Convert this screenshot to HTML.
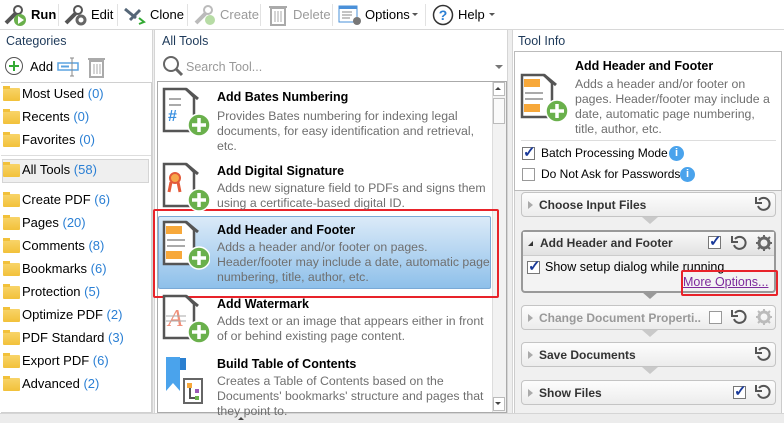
<!DOCTYPE html>
<html><head><meta charset="utf-8"><style>
*{box-sizing:border-box;margin:0;padding:0}
body{width:784px;height:423px;overflow:hidden;background:#fff;font-family:"Liberation Sans",sans-serif;font-size:12px;color:#000;position:relative}
.a{position:absolute;white-space:nowrap}
.tb{font-size:13px}
.gray{color:#9a9a9a}
.n{color:#2a7fd4}
.cat{position:absolute;left:22px;font-size:13px}
.fold{position:absolute;left:3px;width:17px;height:13px;background:linear-gradient(#f8d469,#f2c13a);border-radius:1px}
.fold:before{content:"";position:absolute;left:0;top:-2px;width:7px;height:3px;background:#f2c13a}
.t{position:absolute;left:217px;font-weight:bold;font-size:12.5px}
.d{position:absolute;left:217px;color:#6f6f6f;font-size:12.3px;line-height:15px;white-space:nowrap}
.step{position:absolute;left:521px;width:255px;border:1px solid #c4c4c4;border-radius:4px;background:linear-gradient(#fdfdfd,#ececec);height:25px}
.step .l{position:absolute;left:17px;top:5px;font-weight:bold;font-size:12px;color:#333}
.step .tri{position:absolute;left:6px;top:8px;width:0;height:0;border-left:5px solid #aaa;border-top:4px solid transparent;border-bottom:4px solid transparent}
.cb{position:absolute;width:13px;height:13px;border:1px solid #777;background:#fff}
.chk:after{content:"✓";position:absolute;left:0px;top:-5px;font-size:15px;color:#1a3a9a;font-weight:bold}
.arr{position:absolute;left:642px;width:0;height:0;border-left:8px solid transparent;border-right:8px solid transparent;border-top:7px solid #c9c9c9}
</style></head><body>

<!-- toolbar -->
<div class="a" style="left:0;top:0;width:784px;height:30px;background:#fff;border-bottom:1px solid #d8d8d8"></div>
<svg class="a" style="left:3px;top:4px" width="24" height="22"><path d="M3 19 L13 9" stroke="#555" stroke-width="4"/><circle cx="15" cy="6" r="4" fill="none" stroke="#555" stroke-width="2"/><circle cx="17" cy="16" r="6" fill="#6ab04c"/><path d="M15 12 L21 16 L15 20Z" fill="#fff"/></svg>
<div class="a tb" style="left:31px;top:7px;font-weight:bold">Run</div>
<svg class="a" style="left:63px;top:4px" width="24" height="22"><path d="M3 19 L13 9" stroke="#555" stroke-width="4"/><circle cx="15" cy="6" r="4" fill="none" stroke="#555" stroke-width="2"/><circle cx="18" cy="16" r="4" fill="none" stroke="#666" stroke-width="3"/></svg>
<div class="a tb" style="left:91px;top:7px">Edit</div>
<svg class="a" style="left:122px;top:4px" width="26" height="22"><path d="M3 5 L14 14 M8 16 L18 6" stroke="#567" stroke-width="3"/><path d="M17 14 L22 18 L17 20" stroke="#3a3" stroke-width="2" fill="none"/></svg>
<div class="a tb" style="left:150px;top:7px">Clone</div>
<svg class="a" style="left:193px;top:4px" width="24" height="22"><path d="M3 19 L13 9" stroke="#bbb" stroke-width="4"/><circle cx="15" cy="6" r="4" fill="none" stroke="#bbb" stroke-width="2"/><circle cx="17" cy="16" r="5" fill="#b7dca5"/></svg>
<div class="a tb gray" style="left:220px;top:7px">Create</div>
<svg class="a" style="left:268px;top:3px" width="20" height="24"><rect x="3" y="5" width="14" height="17" fill="none" stroke="#aaa" stroke-width="2"/><rect x="1" y="3" width="18" height="2" fill="#aaa"/><path d="M7 8v11M10 8v11M13 8v11" stroke="#aaa"/></svg>
<div class="a tb gray" style="left:293px;top:7px">Delete</div>
<svg class="a" style="left:338px;top:4px" width="24" height="22"><rect x="1" y="2" width="18" height="16" fill="#fff" stroke="#4a90d9"/><rect x="1" y="2" width="18" height="3" fill="#4a90d9"/><path d="M4 8h10M4 11h10M4 14h8" stroke="#888"/><circle cx="19" cy="17" r="4" fill="#777"/></svg>
<div class="a tb" style="left:365px;top:7px">Options</div>
<div class="a" style="left:412px;top:13px;border-left:3px solid transparent;border-right:3px solid transparent;border-top:3px solid #555"></div>
<svg class="a" style="left:432px;top:4px" width="22" height="22"><circle cx="11" cy="11" r="9.5" fill="#fff" stroke="#333" stroke-width="1.5"/><text x="11" y="16" text-anchor="middle" font-family="Liberation Sans" font-weight="bold" font-size="14" fill="#2a7fd4">?</text></svg>
<div class="a tb" style="left:458px;top:7px">Help</div>
<div class="a" style="left:489px;top:13px;border-left:3px solid transparent;border-right:3px solid transparent;border-top:3px solid #555"></div>
<div class="a" style="left:58px;top:4px;width:1px;height:22px;background:#e2e2e2"></div>
<div class="a" style="left:117px;top:4px;width:1px;height:22px;background:#e2e2e2"></div>
<div class="a" style="left:187px;top:4px;width:1px;height:22px;background:#e2e2e2"></div>
<div class="a" style="left:260px;top:4px;width:1px;height:22px;background:#e2e2e2"></div>
<div class="a" style="left:332px;top:4px;width:1px;height:22px;background:#e2e2e2"></div>
<div class="a" style="left:425px;top:4px;width:1px;height:22px;background:#e2e2e2"></div>

<!-- splitters -->
<div class="a" style="left:152px;top:30px;width:3px;height:393px;background:#eee;border-left:1px solid #d5d5d5;border-right:1px solid #d5d5d5"></div>
<div class="a" style="left:507px;top:30px;width:6px;height:393px;background:#eee;border-left:1px solid #d5d5d5;border-right:1px solid #d5d5d5"></div>
<div class="a" style="left:0;top:413px;width:784px;height:10px;background:#ececec;border-top:1px solid #d5d5d5"></div>
<div class="a" style="left:238px;top:417px;border-left:3px solid transparent;border-right:3px solid transparent;border-bottom:3px solid #444"></div>

<!-- left -->
<div class="a" style="left:6px;top:34px;color:#1e3a5a;font-size:12.5px">Categories</div>
<svg class="a" style="left:4px;top:56px" width="20" height="20"><circle cx="10" cy="10" r="8.5" fill="#fff" stroke="#555"/><path d="M10 5v10M5 10h10" stroke="#3a3" stroke-width="2"/></svg>
<div class="a" style="left:30px;top:59px;font-size:13px">Add</div>
<svg class="a" style="left:57px;top:57px" width="24" height="20"><rect x="1" y="6" width="20" height="7" fill="none" stroke="#5ba3e0" stroke-width="1.5"/><path d="M4 9.5h8" stroke="#5ba3e0" stroke-width="2"/><path d="M15 1v18M13 1h4M13 19h4" stroke="#888"/></svg>
<svg class="a" style="left:87px;top:55px" width="20" height="24"><rect x="3" y="6" width="13" height="16" fill="none" stroke="#aaa" stroke-width="2"/><rect x="1" y="3" width="17" height="2" fill="#aaa"/><path d="M7 9v10M10 9v10M13 9v10" stroke="#aaa"/></svg>
<div class="a" style="left:1px;top:82px;width:151px;height:331px;border:1px solid #d0d0d0;border-left:none;background:#fff"></div>
<div class="a" style="left:1px;top:155px;width:150px;height:1px;background:#ddd"></div>
<div class="a" style="left:2px;top:159px;width:147px;height:24px;background:#efefef;border:1px solid #d5d5d5"></div>
<div class="fold" style="top:88px"></div><div class="cat" style="top:86px">Most Used <span class="n">(0)</span></div>
<div class="fold" style="top:111px"></div><div class="cat" style="top:109px">Recents <span class="n">(0)</span></div>
<div class="fold" style="top:134px"></div><div class="cat" style="top:132px">Favorites <span class="n">(0)</span></div>
<div class="fold" style="top:164px"></div><div class="cat" style="top:162px">All Tools <span class="n">(58)</span></div>
<div class="fold" style="top:194px"></div><div class="cat" style="top:192px">Create PDF <span class="n">(6)</span></div>
<div class="fold" style="top:217px"></div><div class="cat" style="top:215px">Pages <span class="n">(20)</span></div>
<div class="fold" style="top:240px"></div><div class="cat" style="top:238px">Comments <span class="n">(8)</span></div>
<div class="fold" style="top:263px"></div><div class="cat" style="top:261px">Bookmarks <span class="n">(6)</span></div>
<div class="fold" style="top:286px"></div><div class="cat" style="top:284px">Protection <span class="n">(5)</span></div>
<div class="fold" style="top:309px"></div><div class="cat" style="top:307px">Optimize PDF <span class="n">(2)</span></div>
<div class="fold" style="top:332px"></div><div class="cat" style="top:330px">PDF Standard <span class="n">(3)</span></div>
<div class="fold" style="top:355px"></div><div class="cat" style="top:353px">Export PDF <span class="n">(6)</span></div>
<div class="fold" style="top:378px"></div><div class="cat" style="top:376px">Advanced <span class="n">(2)</span></div>

<!-- middle -->
<div class="a" style="left:162px;top:34px;color:#1e3a5a;font-size:12.5px">All Tools</div>
<svg class="a" style="left:162px;top:55px" width="24" height="24"><circle cx="9" cy="9" r="7" fill="none" stroke="#666" stroke-width="2"/><path d="M14 14l6 6" stroke="#666" stroke-width="3"/></svg>
<div class="a" style="left:186px;top:60px;color:#999;font-size:12.5px">Search Tool...</div>
<div class="a" style="left:495px;top:65px;border-left:4px solid transparent;border-right:4px solid transparent;border-top:4px solid #777"></div>
<div class="a" style="left:157px;top:81px;width:350px;height:332px;border:1px solid #aaa;background:#fff"></div>
<div class="a" style="left:492px;top:82px;width:14px;height:330px;background:#f2f2f2;border-left:1px solid #ddd"></div>
<div class="a" style="left:493px;top:82px;width:12px;height:14px;border:1px solid #bbb;background:#fff"></div>
<div class="a" style="left:495px;top:87px;border-left:3px solid transparent;border-right:3px solid transparent;border-bottom:3px solid #444"></div>
<div class="a" style="left:493px;top:98px;width:12px;height:26px;border:1px solid #bbb;background:#fafafa"></div>
<div class="a" style="left:493px;top:397px;width:12px;height:14px;border:1px solid #bbb;background:#fff"></div>
<div class="a" style="left:495px;top:402px;border-left:3px solid transparent;border-right:3px solid transparent;border-top:3px solid #444"></div>

<!-- selected -->
<div class="a" style="left:158px;top:216px;width:333px;height:73px;border:1px solid #7aa9d6;border-radius:2px;background:linear-gradient(#dbeaf8,#8ec0ea)"></div>
<div class="a" style="left:153px;top:209px;width:346px;height:89px;border:2px solid #e8232a;border-radius:2px"></div>

<!-- tool icons -->
<svg class="a" style="left:162px;top:87px" width="48" height="50"><path d="M2 2h22l8 8v34H2Z" fill="#fff" stroke="#555" stroke-width="2.5"/><path d="M24 2l12 10" stroke="#555" stroke-width="3"/><path d="M7 12h12M7 18h12" stroke="#aaa" stroke-width="2"/><text x="6" y="34" font-family="Liberation Sans" font-size="16" font-weight="bold" fill="#3a90e0">#</text><circle cx="37" cy="38" r="11" fill="#6ab04c" stroke="#fff" stroke-width="1.5"/><path d="M37 31v14M30 38h14" stroke="#fff" stroke-width="3.5"/></svg>
<svg class="a" style="left:162px;top:162px" width="48" height="50"><path d="M2 2h22l8 8v34H2Z" fill="#fff" stroke="#555" stroke-width="2.5"/><path d="M24 2l12 10" stroke="#555" stroke-width="3"/><circle cx="13" cy="16" r="5" fill="#f7a74a" stroke="#e35a3a" stroke-width="2"/><path d="M9 20l-2 10M16 20l2 10" stroke="#e35a3a" stroke-width="3"/><circle cx="37" cy="38" r="11" fill="#6ab04c" stroke="#fff" stroke-width="1.5"/><path d="M37 31v14M30 38h14" stroke="#fff" stroke-width="3.5"/></svg>
<svg class="a" style="left:162px;top:220px" width="48" height="50"><path d="M2 2h22l8 8v34H2Z" fill="#fff" stroke="#555" stroke-width="2.5"/><path d="M24 2l12 10" stroke="#555" stroke-width="3"/><rect x="4" y="6" width="16" height="8" fill="#f7a83a"/><path d="M5 20h18M5 26h18" stroke="#aaa" stroke-width="2"/><rect x="4" y="31" width="16" height="8" fill="#f7a83a"/><circle cx="37" cy="38" r="11" fill="#6ab04c" stroke="#fff" stroke-width="1.5"/><path d="M37 31v14M30 38h14" stroke="#fff" stroke-width="3.5"/></svg>
<svg class="a" style="left:162px;top:294px" width="48" height="50"><path d="M2 2h22l8 8v34H2Z" fill="#fff" stroke="#555" stroke-width="2.5"/><path d="M24 2l12 10" stroke="#555" stroke-width="3"/><text x="6" y="32" font-family="Liberation Serif" font-style="italic" font-size="24" fill="#f0907a">A</text><path d="M4 22h20M4 27h20" stroke="#aaa"/><circle cx="37" cy="38" r="11" fill="#6ab04c" stroke="#fff" stroke-width="1.5"/><path d="M37 31v14M30 38h14" stroke="#fff" stroke-width="3.5"/></svg>
<svg class="a" style="left:164px;top:355px" width="46" height="52"><path d="M2 2h14v34l-7-8-7 8Z" fill="#4aa3ec"/><rect x="16" y="3" width="6" height="12" fill="#2a7fd0"/><rect x="20" y="24" width="18" height="24" fill="#fff" stroke="#666" stroke-width="2"/><rect x="23" y="28" width="5" height="5" fill="#f7a83a"/><path d="M26 33v10h8" stroke="#555" stroke-width="2" fill="none"/><rect x="31" y="34" width="4" height="4" fill="#9b59b6"/><rect x="31" y="41" width="4" height="4" fill="#6ab04c"/></svg>

<div class="t" style="top:90px">Add Bates Numbering</div>
<div class="d" style="top:109px">Provides Bates numbering for indexing legal<br>documents, for easy identification and retrieval,<br>etc.</div>
<div class="t" style="top:164px">Add Digital Signature</div>
<div class="d" style="top:181px">Adds new signature field to PDFs and signs them<br>using a certificate-based digital ID.</div>
<div class="t" style="top:223px">Add Header and Footer</div>
<div class="d" style="top:240px">Adds a header and/or footer on pages.<br>Header/footer may include a date, automatic page<br>numbering, title, author, etc.</div>
<div class="t" style="top:297px">Add Watermark</div>
<div class="d" style="top:314px">Adds text or an image that appears either in front<br>of or behind existing page content.</div>
<div class="t" style="top:357px">Build Table of Contents</div>
<div class="d" style="top:374px">Creates a Table of Contents based on the<br>Documents' bookmarks' structure and pages that<br>they point to.</div>

<!-- right -->
<div class="a" style="left:518px;top:34px;color:#1e3a5a;font-size:12.5px">Tool Info</div>
<div class="a" style="left:514px;top:51px;width:268px;height:140px;border:1px solid #bbb;background:#fff"></div>
<svg class="a" style="left:520px;top:73px" width="48" height="50"><path d="M2 2h22l8 8v34H2Z" fill="#fff" stroke="#555" stroke-width="2.5"/><path d="M24 2l12 10" stroke="#555" stroke-width="3"/><rect x="4" y="6" width="16" height="8" fill="#f7a83a"/><path d="M5 20h18M5 26h18" stroke="#aaa" stroke-width="2"/><rect x="4" y="31" width="16" height="8" fill="#f7a83a"/><circle cx="37" cy="38" r="11" fill="#6ab04c" stroke="#fff" stroke-width="1.5"/><path d="M37 31v14M30 38h14" stroke="#fff" stroke-width="3.5"/></svg>
<div class="a" style="left:575px;top:59px;font-weight:bold;font-size:12.5px">Add Header and Footer</div>
<div class="a" style="left:575px;top:77px;color:#6f6f6f;font-size:12.3px;line-height:15px">Adds a header and/or footer on<br>pages. Header/footer may include a<br>date, automatic page numbering,<br>title, author, etc.</div>
<div class="a" style="left:521px;top:140px;width:255px;height:1px;background:#ddd"></div>
<div class="cb chk" style="left:522px;top:147px"></div>
<div class="a" style="left:541px;top:146px;font-size:12px">Batch Processing Mode</div>
<div class="a" style="left:669px;top:146px;width:15px;height:15px;border-radius:50%;background:#4aa3ec;color:#fff;font-size:11px;font-weight:bold;text-align:center;line-height:15px">i</div>
<div class="cb" style="left:522px;top:168px;border-color:#999"></div>
<div class="a" style="left:541px;top:167px;font-size:12px">Do Not Ask for Passwords</div>
<div class="a" style="left:680px;top:167px;width:15px;height:15px;border-radius:50%;background:#4aa3ec;color:#fff;font-size:11px;font-weight:bold;text-align:center;line-height:15px">i</div>

<div class="a" style="left:514px;top:191px;width:268px;height:222px;background:#f0f0f0;border-left:1px solid #ccc;border-right:1px solid #ccc"></div>

<div class="step" style="top:192px"><div class="tri"></div><div class="l">Choose Input Files</div></div>
<div class="arr" style="top:217px"></div>
<div class="step" style="top:230px;height:63px;border:2px solid #999;background:#f3f3f3">
 <div style="position:absolute;left:0;top:0;width:251px;height:24px;background:linear-gradient(#f8f8f8,#e2e2e2);border-bottom:1px solid #ccc"></div>
 <div style="position:absolute;left:5px;top:9px;border-left:5px solid transparent;border-bottom:5px solid #333"></div>
 <div class="l" style="top:4px">Add Header and Footer</div>
 <div class="cb chk" style="left:185px;top:4px"></div>
 <div class="cb chk" style="left:4px;top:29px"></div>
 <div style="position:absolute;left:22px;top:28px;font-size:12.5px">Show setup dialog while running</div>
</div>
<div class="arr" style="top:292px;border-top-color:#999"></div>
<div class="a" style="left:683px;top:275px;color:#7d2a9c;text-decoration:underline;font-size:12.5px">More Options...</div>
<div class="a" style="left:681px;top:270px;width:97px;height:26px;border:2px solid #e8232a;border-radius:2px"></div>
<div class="step" style="top:305px"><div class="tri"></div><div class="l" style="color:#999">Change Document Properti..</div><div class="cb" style="left:187px;top:5px;border-color:#999"></div></div>
<div class="arr" style="top:330px"></div>
<div class="step" style="top:342px"><div class="tri"></div><div class="l">Save Documents</div></div>
<div class="arr" style="top:367px"></div>
<div class="step" style="top:380px"><div class="tri"></div><div class="l">Show Files</div><div class="cb chk" style="left:211px;top:5px"></div></div>

<!-- reset / gear icons -->
<svg class="a" style="left:755px;top:195px" width="18" height="18"><path d="M4 5A6 6 0 1 1 3 11" fill="none" stroke="#555" stroke-width="2"/><path d="M1 2v6h6" fill="none" stroke="#555" stroke-width="2"/></svg>
<svg class="a" style="left:731px;top:234px" width="18" height="18"><path d="M4 5A6 6 0 1 1 3 11" fill="none" stroke="#555" stroke-width="2"/><path d="M1 2v6h6" fill="none" stroke="#555" stroke-width="2"/></svg>
<svg class="a" style="left:755px;top:234px" width="18" height="18"><circle cx="9" cy="9" r="5" fill="none" stroke="#666" stroke-width="3"/><path d="M9 1v4M9 13v4M1 9h4M13 9h4M3 3l3 3M12 12l3 3M3 15l3-3M12 6l3-3" stroke="#666" stroke-width="2"/></svg>
<svg class="a" style="left:731px;top:308px" width="18" height="18"><path d="M4 5A6 6 0 1 1 3 11" fill="none" stroke="#555" stroke-width="2"/><path d="M1 2v6h6" fill="none" stroke="#555" stroke-width="2"/></svg>
<svg class="a" style="left:755px;top:308px" width="18" height="18"><circle cx="9" cy="9" r="5" fill="none" stroke="#bbb" stroke-width="3"/><path d="M9 1v4M9 13v4M1 9h4M13 9h4M3 3l3 3M12 12l3 3M3 15l3-3M12 6l3-3" stroke="#bbb" stroke-width="2"/></svg>
<svg class="a" style="left:755px;top:345px" width="18" height="18"><path d="M4 5A6 6 0 1 1 3 11" fill="none" stroke="#555" stroke-width="2"/><path d="M1 2v6h6" fill="none" stroke="#555" stroke-width="2"/></svg>
<svg class="a" style="left:755px;top:383px" width="18" height="18"><path d="M4 5A6 6 0 1 1 3 11" fill="none" stroke="#555" stroke-width="2"/><path d="M1 2v6h6" fill="none" stroke="#555" stroke-width="2"/></svg>
</body></html>
